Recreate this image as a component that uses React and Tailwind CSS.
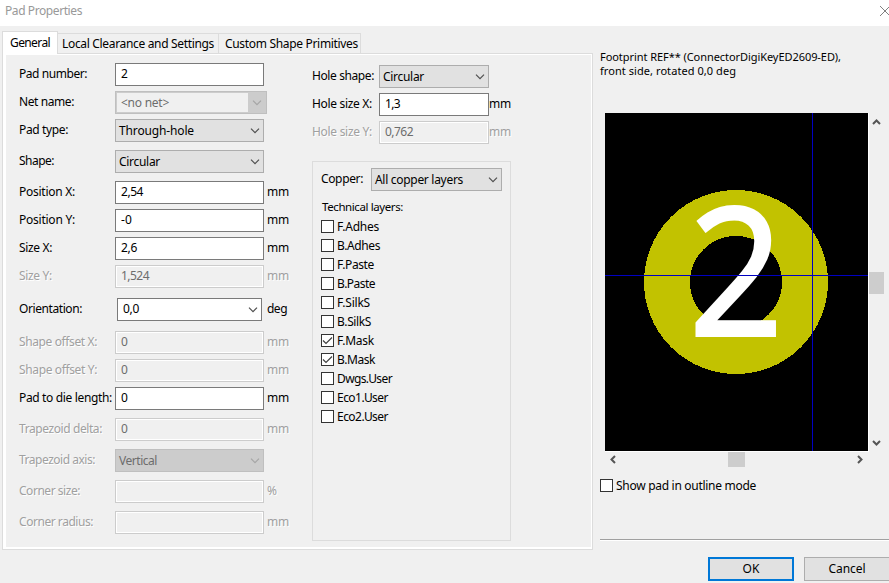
import { useLayoutEffect, useRef } from "react";

// Text run whose letter spacing is adjusted so that it fills a given width.
function T({ w, children, className = "" }) {
  const ref = useRef(null);
  useLayoutEffect(() => {
    const el = ref.current;
    el.style.letterSpacing = "0px";
    const natural = el.getBoundingClientRect().width;
    el.style.letterSpacing = (w - natural) / children.length + "px";
  }, [w, children]);
  return (
    <span ref={ref} className={"inline-block shrink-0 whitespace-pre " + className}>
      {children}
    </span>
  );
}

const dim = "text-[#a0a0a0] [text-shadow:1px_1px_0_#fff]";

function Chevron({ off }) {
  return (
    <svg width="10" height="6" viewBox="0 0 10 6" fill="none" stroke={off ? "#a6a6a6" : "#505050"} strokeWidth="1.2">
      <path d="M1 0.7 L5 4.7 L9 0.7" />
    </svg>
  );
}

function Input({ value, w, off, cls }) {
  return (
    <div
      className={
        "flex h-[23px] shrink-0 items-center border pl-[5px] pb-px " + cls +
        (off ? " border-[#cccccc] bg-[#f0f0f0] text-[#6d6d6d] shadow-[inset_0_0_0_1px_#fff]" : " border-[#7a7a7a] bg-white")
      }
    >
      {value && <T w={w}>{value}</T>}
    </div>
  );
}

function Select({ value, w, off, cls }) {
  return (
    <div
      className={
        "flex h-[23px] shrink-0 items-center justify-between border pl-[3px] pr-[3px] " + cls +
        (off ? " border-[#bfbfbf] bg-[#cccccc] text-[#6d6d6d]" : " border-[#adadad] bg-[#e1e1e1]")
      }
    >
      <T w={w}>{value}</T>
      <Chevron off={off} />
    </div>
  );
}

function Row({ label, lw, unit, uw = 22, off, mt, labelCls = "w-[96px]", unitCls = "ml-[3px]", children }) {
  return (
    <div className={"flex h-[23px] items-center " + mt}>
      <div className={"shrink-0 pb-px " + labelCls + " " + (off ? dim : "")}>
        <T w={lw}>{label}</T>
      </div>
      {children}
      {unit && (
        <div className={"pb-px " + unitCls + " " + (off ? dim : "")}>
          <T w={uw}>{unit}</T>
        </div>
      )}
    </div>
  );
}

function Check({ label, w, on }) {
  return (
    <div className="flex h-[19px] items-center">
      <div className="mr-[3px] flex size-[13px] shrink-0 items-center justify-center border border-[#333] bg-white">
        {on && (
          <svg width="11" height="11" viewBox="0 0 11 11" fill="none" stroke="#404040" strokeWidth="1.2">
            <path d="M1 5.5 L4 8.5 L10 2.5" />
          </svg>
        )}
      </div>
      <T w={w}>{label}</T>
    </div>
  );
}

const layers = [
  ["F.Adhes", 42], ["B.Adhes", 43], ["F.Paste", 37], ["B.Paste", 38], ["F.SilkS", 33], ["B.SilkS", 34],
  ["F.Mask", 37, true], ["B.Mask", 38, true], ["Dwgs.User", 55], ["Eco1.User", 51], ["Eco2.User", 51],
];

function Arrow({ d, w, h }) {
  return (
    <svg width={w} height={h} viewBox={`0 0 ${w} ${h}`} fill="none" stroke="#555" strokeWidth="2">
      <path d={d} />
    </svg>
  );
}

function General() {
  const f = "w-[149px]";
  const hl = "w-[67px]";
  return (
    <div className="flex h-[497px] w-[591px] border border-[#dcdcdc] bg-white pt-px pr-px pb-[2px] pl-[3px]">
      <div className="flex w-full bg-[#f0f0f0]">
        <div className="w-[306px] pl-[13px]">
          <Row label="Pad number:" lw={68} mt="mt-[8px]"><Input value="2" w={7} cls={f} /></Row>
          <Row label="Net name:" lw={55} mt="mt-[5px]">
            <div className="flex h-[23px] w-[152px] items-center border border-[#bfbfbf] bg-[#f0f0f0] pl-[5px] text-[#6d6d6d] shadow-[inset_0_0_0_1px_#ccc]">
              <T w={48}>{"<no net>"}</T>
              <div className="ml-auto flex h-full w-[18px] items-center justify-center bg-[#cccccc]"><Chevron off /></div>
            </div>
          </Row>
          <Row label="Pad type:" lw={49} mt="mt-[5px]"><Select value="Through-hole" w={75} cls={f} /></Row>
          <Row label="Shape:" lw={35} mt="mt-[8px]"><Select value="Circular" w={41} cls={f} /></Row>
          <Row label="Position X:" lw={56} unit="mm" mt="mt-[8px]"><Input value="2,54" w={22} cls={f} /></Row>
          <Row label="Position Y:" lw={56} unit="mm" mt="mt-[5px]"><Input value="-0" w={11} cls={f} /></Row>
          <Row label="Size X:" lw={33} unit="mm" mt="mt-[5px]"><Input value="2,6" w={16} cls={f} /></Row>
          <Row label="Size Y:" lw={33} unit="mm" off mt="mt-[5px]"><Input off value="1,524" w={28} cls={f} /></Row>
          <Row label="Orientation:" lw={63} unit="deg" uw={20} mt="mt-[10px]" labelCls="w-[98px]" unitCls="ml-[5px]">
            <div className="flex h-[23px] w-[145px] items-center justify-between border border-[#7a7a7a] bg-white pl-[5px] pr-[3px]">
              <T w={16} className="pb-px">0,0</T>
              <Chevron />
            </div>
          </Row>
          <Row label="Shape offset X:" lw={78} unit="mm" off mt="mt-[10px]"><Input off value="0" w={7} cls={f} /></Row>
          <Row label="Shape offset Y:" lw={78} unit="mm" off mt="mt-[5px]"><Input off value="0" w={7} cls={f} /></Row>
          <Row label="Pad to die length:" lw={93} unit="mm" mt="mt-[5px]"><Input value="0" w={7} cls={f} /></Row>
          <Row label="Trapezoid delta:" lw={83} unit="mm" off mt="mt-[8px]"><Input off value="0" w={7} cls={f} /></Row>
          <Row label="Trapezoid axis:" lw={76} off mt="mt-[8px]"><Select off value="Vertical" w={38} cls={f} /></Row>
          <Row label="Corner size:" lw={61} unit="%" uw={11} off mt="mt-[8px]"><Input off cls={f} /></Row>
          <Row label="Corner radius:" lw={74} unit="mm" off mt="mt-[8px]"><Input off cls={f} /></Row>
        </div>
        <div className="w-[199px]">
          <Row label="Hole shape:" lw={62} mt="mt-[10px]" labelCls={hl}><Select value="Circular" w={41} cls="w-[110px]" /></Row>
          <Row label="Hole size X:" lw={60} unit="mm" unitCls="" mt="mt-[5px]" labelCls={hl}><Input value="1,3" w={15} cls="w-[110px]" /></Row>
          <Row label="Hole size Y:" lw={60} unit="mm" unitCls="" off mt="mt-[5px]" labelCls={hl}><Input off value="0,762" w={28} cls="w-[110px]" /></Row>
          <div className="mt-[17px] h-[380px] w-[199px] border border-[#dcdcdc] pl-[8px]">
            <Row label="Copper:" lw={42} mt="mt-[6px]" labelCls="w-[50px]"><Select value="All copper layers" w={88} cls="w-[131px]" /></Row>
            <div className="mt-[7px] mb-[1px] flex h-[18px] items-center pl-px"><T w={81} className="text-[11.5px]">Technical layers:</T></div>
            {layers.map(([n, w, on]) => <Check key={n} label={n} w={w} on={on} />)}
          </div>
        </div>
      </div>
    </div>
  );
}

function Preview() {
  return (
    <div className="ml-[5px] flex h-[355px] w-[284px] flex-col">
      <div className="flex h-[339px]">
        <svg width="264" height="339" viewBox="605 113 264 339" className="shrink-0 bg-white">
          <rect x="605" y="113" width="263" height="338" fill="#000" />
          <circle cx="736" cy="282" r="69" fill="none" stroke="#c2c200" strokeWidth="46" shapeRendering="crispEdges" />
          <text transform="translate(688.5 336) scale(0.93 1)" fontFamily="Noto Sans, sans-serif" fontSize="179" fill="#fff" stroke="#fff" strokeWidth="2">2</text>
          <path d="M605 275.5H868M812.5 113V451" stroke="#0000c2" strokeWidth="1" shapeRendering="crispEdges" />
        </svg>
        <div className="flex w-[15px] flex-col items-center justify-between pt-[6px] pb-[6px]">
          <Arrow w={9} h={6} d="M1 5 L4.5 1.5 L8 5" />
          <div className="h-[22px] w-[15px] bg-[#cdcdcd]" />
          <Arrow w={9} h={6} d="M1 1 L4.5 4.5 L8 1" />
        </div>
      </div>
      <div className="flex h-[15px] w-[263px] items-center justify-between pr-[5px] pl-[5px]">
        <Arrow w={6} h={9} d="M5 1 L1.5 4.5 L5 8" />
        <div className="h-[15px] w-[17px] bg-[#cdcdcd]" />
        <Arrow w={6} h={9} d="M1 1 L4.5 4.5 L1 8" />
      </div>
    </div>
  );
}

export default function App() {
  return (
    <div className="flex h-[583px] w-[889px] flex-col overflow-hidden bg-[#f0f0f0] font-['Noto_Sans',sans-serif] text-[12px] leading-[16px] text-black">
      <div className="flex h-[26px] shrink-0 items-center justify-between bg-white pb-[4px] pl-[5px]">
        <T w={77} className="text-[#999]">Pad Properties</T>
        <svg width="9" height="12" viewBox="0 0 9 12" fill="none" stroke="#808080" strokeWidth="1"><path d="M0 1 L10 11 M0 11 L10 1" /></svg>
      </div>
      <div className="flex">
        <div className="w-[598px] shrink-0 pt-[5px] pl-[2px]">
          <div className="flex h-[22px] items-end">
            <div className="z-10 -mb-px flex h-[23px] w-[56px] items-center border border-b-0 border-[#dcdcdc] bg-white pl-[7px]"><T w={40}>General</T></div>
            <div className="flex h-[20px] w-[161px] items-center border-t border-r border-[#dcdcdc] pl-[4px]"><T w={152}>Local Clearance and Settings</T></div>
            <div className="flex h-[20px] w-[142px] items-center border-t border-r border-[#dcdcdc] pl-[6px]"><T w={133}>Custom Shape Primitives</T></div>
          </div>
          <General />
        </div>
        <div className="w-[291px] shrink-0 pt-[24px] pl-[2px]">
          <div className="h-[63px] text-[11px] leading-[14px]">
            <div className="h-[14px]"><T w={241}>Footprint REF** (ConnectorDigiKeyED2609-ED),</T></div>
            <div className="h-[14px]"><T w={136}>front side, rotated 0,0 deg</T></div>
          </div>
          <Preview />
          <div className="mt-[8px]"><Check label="Show pad in outline mode" w={140} /></div>
          <div className="mt-[44px] h-[2px] border-t border-[#a0a0a0] bg-white" />
          <div className="mt-[16px] flex pl-[108px]">
            <div className="flex h-[24px] w-[86px] shrink-0 items-center justify-center border-2 border-[#0078d7] bg-[#e1e1e1]"><T w={17}>OK</T></div>
            <div className="ml-[10px] flex h-[24px] w-[86px] shrink-0 items-center justify-center border border-[#adadad] bg-[#e1e1e1]"><T w={37}>Cancel</T></div>
          </div>
        </div>
      </div>
    </div>
  );
}
